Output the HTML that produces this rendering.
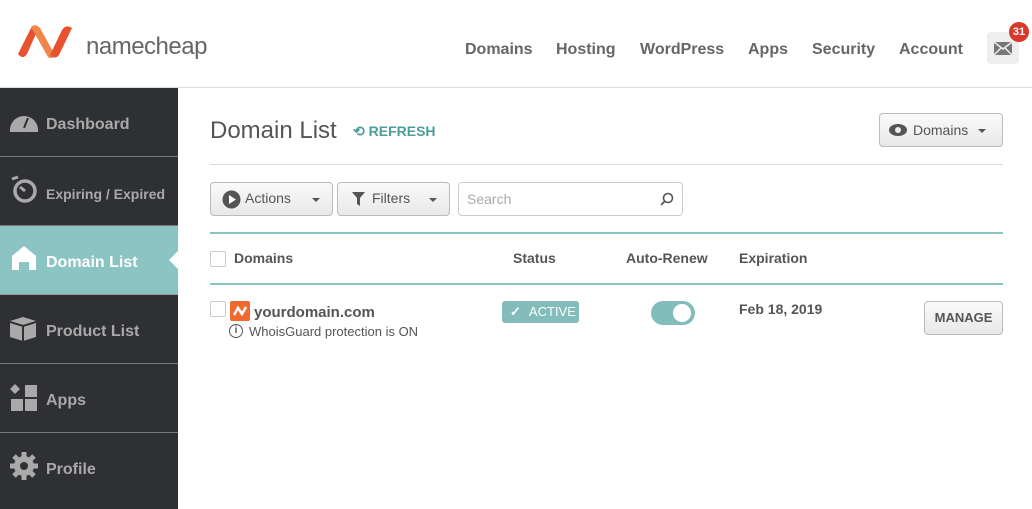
<!DOCTYPE html>
<html><head><meta charset="utf-8"><style>
*{box-sizing:border-box;margin:0;padding:0}
body{width:1032px;height:509px;overflow:hidden;background:#fff;font-family:"Liberation Sans",sans-serif;position:relative;color:#555}
.abs{position:absolute}
.hdr{left:0;top:0;width:1032px;height:88px;border-bottom:1px solid #ddd}
.nav{top:41px;font-weight:bold;font-size:16px;color:#666}
.side{left:0;top:88px;width:178px;height:421px;background:#2f3033}
.item{position:absolute;left:0;width:178px;height:69px;border-bottom:1px solid #777;color:#a9a9a9;font-weight:bold;font-size:16px}
.item span{position:absolute;left:46px;top:27px}
.item svg{position:absolute;left:10px}
.btn{border:1px solid #bbb;border-radius:4px;background:linear-gradient(#fafafa,#e8e8e8);height:34px}
.th{top:250px;font-weight:bold;font-size:14px;color:#555}
</style></head><body>
<div class="abs hdr"></div>
<svg class="abs" style="left:14px;top:24px" width="64" height="36" viewBox="0 0 64 36">
<path d="M4 30 L16 6 Q19 0 25 3 L13 30 Q9 36 4 30Z" fill="#e8532d"/>
<path d="M17 3 Q21 -1 26 4 L41 31 Q38 36 34 33 L17 3Z" fill="#f0874a"/>
<path d="M36 31 L48 6 Q52 0 58 4 L45 31 Q41 36 36 31Z" fill="#e8532d"/>
</svg>
<div class="abs" style="left:86px;top:33px;font-size:24px;color:#666;letter-spacing:-0.5px">namecheap</div>
<div class="abs nav" style="left:465px">Domains</div>
<div class="abs nav" style="left:556px">Hosting</div>
<div class="abs nav" style="left:640px">WordPress</div>
<div class="abs nav" style="left:748px">Apps</div>
<div class="abs nav" style="left:812px">Security</div>
<div class="abs nav" style="left:899px">Account</div>
<div class="abs" style="left:987px;top:32px;width:32px;height:32px;background:#eee;border-radius:4px"></div>
<svg class="abs" style="left:994px;top:42px" width="18" height="13"><rect width="18" height="13" fill="#777"/><path d="M0 0 L9 7 L18 0 M0 13 L7 6 M18 13 L11 6" stroke="#eee" stroke-width="1.5" fill="none"/></svg>
<div class="abs" style="left:1009px;top:22px;width:20px;height:20px;border-radius:50%;background:#d9382a;color:#fff;font-size:11px;font-weight:bold;text-align:center;line-height:20px">31</div>

<div class="abs side">
<div class="item" style="top:0"><svg style="top:22px" width="28" height="22" viewBox="0 0 28 22"><path d="M0 20 A14 14 0 0 1 28 20 L28 22 L0 22Z" fill="#a9a9a9"/><path d="M14 18 L18 8" stroke="#2f3033" stroke-width="2"/></svg><span style="top:28px">Dashboard</span></div>
<div class="item" style="top:69px"><svg style="top:18px" width="28" height="28" viewBox="0 0 28 28"><circle cx="15" cy="16" r="10" fill="none" stroke="#a9a9a9" stroke-width="3.5"/><path d="M2 4 L8 2 M15 16 L10 12" stroke="#a9a9a9" stroke-width="3"/></svg><span style="top:29px;font-size:14px">Expiring / Expired</span></div>
<div class="item" style="top:138px;background:#8cc4c3;color:#fff;border-bottom:1px solid #999"><svg style="top:20px;left:12px" width="24" height="24" viewBox="0 0 24 24"><path d="M0 10 L12 0 L24 10 L24 24 L17 24 L17 16 L7 16 L7 24 L0 24Z" fill="#fff"/></svg><span style="top:28px">Domain List</span>
<div style="position:absolute;right:0;top:25px;border:9px solid transparent;border-right-color:#fff;border-right-width:9px"></div></div>
<div class="item" style="top:207px"><svg style="top:20px" width="26" height="26" viewBox="0 0 26 26"><path d="M0 6 L13 2 L26 6 L26 22 L13 26 L0 22Z" fill="#a9a9a9"/><path d="M0 7 L13 11 L26 7 M13 11 V26" stroke="#2f3033" stroke-width="2" fill="none"/></svg><span style="top:28px">Product List</span></div>
<div class="item" style="top:276px"><svg style="top:20px" width="28" height="28" viewBox="0 0 28 28"><path d="M5 0 L10 5 L5 10 L0 5Z" fill="#a9a9a9"/><rect x="15" y="1" width="12" height="12" fill="#a9a9a9"/><rect x="1" y="15" width="12" height="12" fill="#a9a9a9"/><rect x="15" y="15" width="12" height="12" fill="#a9a9a9"/></svg><span style="top:28px">Apps</span></div>
<div class="item" style="top:345px;border-bottom:none"><svg style="top:19px" width="28" height="28" viewBox="0 0 28 28"><circle cx="14" cy="14" r="10" fill="#a9a9a9"/><g stroke="#a9a9a9" stroke-width="5"><path d="M14 0V28M0 14H28M4 4L24 24M24 4L4 24"/></g><circle cx="14" cy="14" r="4" fill="#2f3033"/></svg><span style="top:28px">Profile</span></div>
</div>

<div class="abs" style="left:210px;top:117px;font-size:24px;color:#555">Domain List</div>
<div class="abs" style="left:353px;top:123px;font-size:14px;font-weight:bold;color:#4d9d99">⟲ REFRESH</div>
<div class="abs btn" style="left:879px;top:113px;width:124px;height:34px"></div>
<svg class="abs" style="left:889px;top:124px" width="18" height="12"><ellipse cx="9" cy="6" rx="9" ry="6" fill="#555"/><circle cx="9" cy="6" r="3" fill="#eee"/></svg>
<div class="abs" style="left:913px;top:122px;font-size:14px;color:#555">Domains</div>
<div class="abs" style="left:978px;top:129px;border:4px solid transparent;border-top:4px solid #555"></div>
<div class="abs" style="left:210px;top:164px;width:793px;height:1px;background:#ddd"></div>

<div class="abs btn" style="left:210px;top:182px;width:123px"></div>
<svg class="abs" style="left:222px;top:190px" width="19" height="19"><circle cx="9.5" cy="9.5" r="9" fill="#555"/><path d="M7 5 L14 9.5 L7 14Z" fill="#fff"/></svg>
<div class="abs" style="left:245px;top:190px;font-size:14px;color:#555">Actions</div>
<div class="abs" style="left:312px;top:198px;border:4px solid transparent;border-top:4px solid #555"></div>
<div class="abs btn" style="left:337px;top:182px;width:113px"></div>
<svg class="abs" style="left:352px;top:192px" width="13" height="14"><path d="M0 0 H13 L8 6 V14 L5 12 V6Z" fill="#555"/></svg>
<div class="abs" style="left:372px;top:190px;font-size:14px;color:#555">Filters</div>
<div class="abs" style="left:429px;top:198px;border:4px solid transparent;border-top:4px solid #555"></div>
<div class="abs" style="left:458px;top:182px;width:225px;height:34px;border:1px solid #ccc;border-radius:4px"></div>
<div class="abs" style="left:467px;top:191px;font-size:14px;color:#aaa">Search</div>
<svg class="abs" style="left:660px;top:192px" width="14" height="14"><circle cx="8" cy="6" r="4.5" fill="none" stroke="#555" stroke-width="1.6"/><path d="M5 9 L1 13" stroke="#555" stroke-width="1.8"/></svg>

<div class="abs" style="left:210px;top:232px;width:793px;height:2px;background:#8cc4c3"></div>
<div class="abs" style="left:210px;top:251px;width:16px;height:16px;border:1px solid #ccc;border-radius:2px"></div>
<div class="abs th" style="left:234px">Domains</div>
<div class="abs th" style="left:513px">Status</div>
<div class="abs th" style="left:626px">Auto-Renew</div>
<div class="abs th" style="left:739px">Expiration</div>
<div class="abs" style="left:210px;top:283px;width:793px;height:2px;background:#8cc4c3"></div>

<div class="abs" style="left:210px;top:301px;width:16px;height:16px;border:1px solid #ccc;border-radius:2px"></div>
<div class="abs" style="left:230px;top:301px;width:20px;height:20px;background:#ef6a2e;border-radius:2px"></div>
<svg class="abs" style="left:232px;top:305px" width="16" height="12"><path d="M2 10 L6 3 L10 9 L14 2" stroke="#fff" stroke-width="2.5" fill="none"/></svg>
<div class="abs" style="left:254px;top:304px;font-size:15px;font-weight:bold;color:#555">yourdomain.com</div>
<div class="abs" style="left:229px;top:324px;width:14px;height:14px;border:1.5px solid #555;border-radius:50%;font-size:10px;font-weight:bold;text-align:center;line-height:11px">i</div>
<div class="abs" style="left:249px;top:324px;font-size:13px;color:#555">WhoisGuard protection is ON</div>
<div class="abs" style="left:502px;top:301px;width:77px;height:22px;background:#82bdbb;border-radius:3px;color:#fff;font-size:13px;line-height:22px"><span style="margin-left:8px;font-weight:bold">✓</span><span style="margin-left:8px">ACTIVE</span></div>
<div class="abs" style="left:651px;top:301px;width:44px;height:24px;background:#82bdbb;border-radius:12px"></div>
<div class="abs" style="left:673px;top:304px;width:18px;height:18px;background:#fff;border-radius:50%"></div>
<div class="abs" style="left:739px;top:301px;font-size:14px;font-weight:bold;color:#555">Feb 18, 2019</div>
<div class="abs btn" style="left:924px;top:301px;width:79px;height:34px;font-size:13px;font-weight:bold;color:#555;text-align:center;line-height:32px">MANAGE</div>
</body></html>
